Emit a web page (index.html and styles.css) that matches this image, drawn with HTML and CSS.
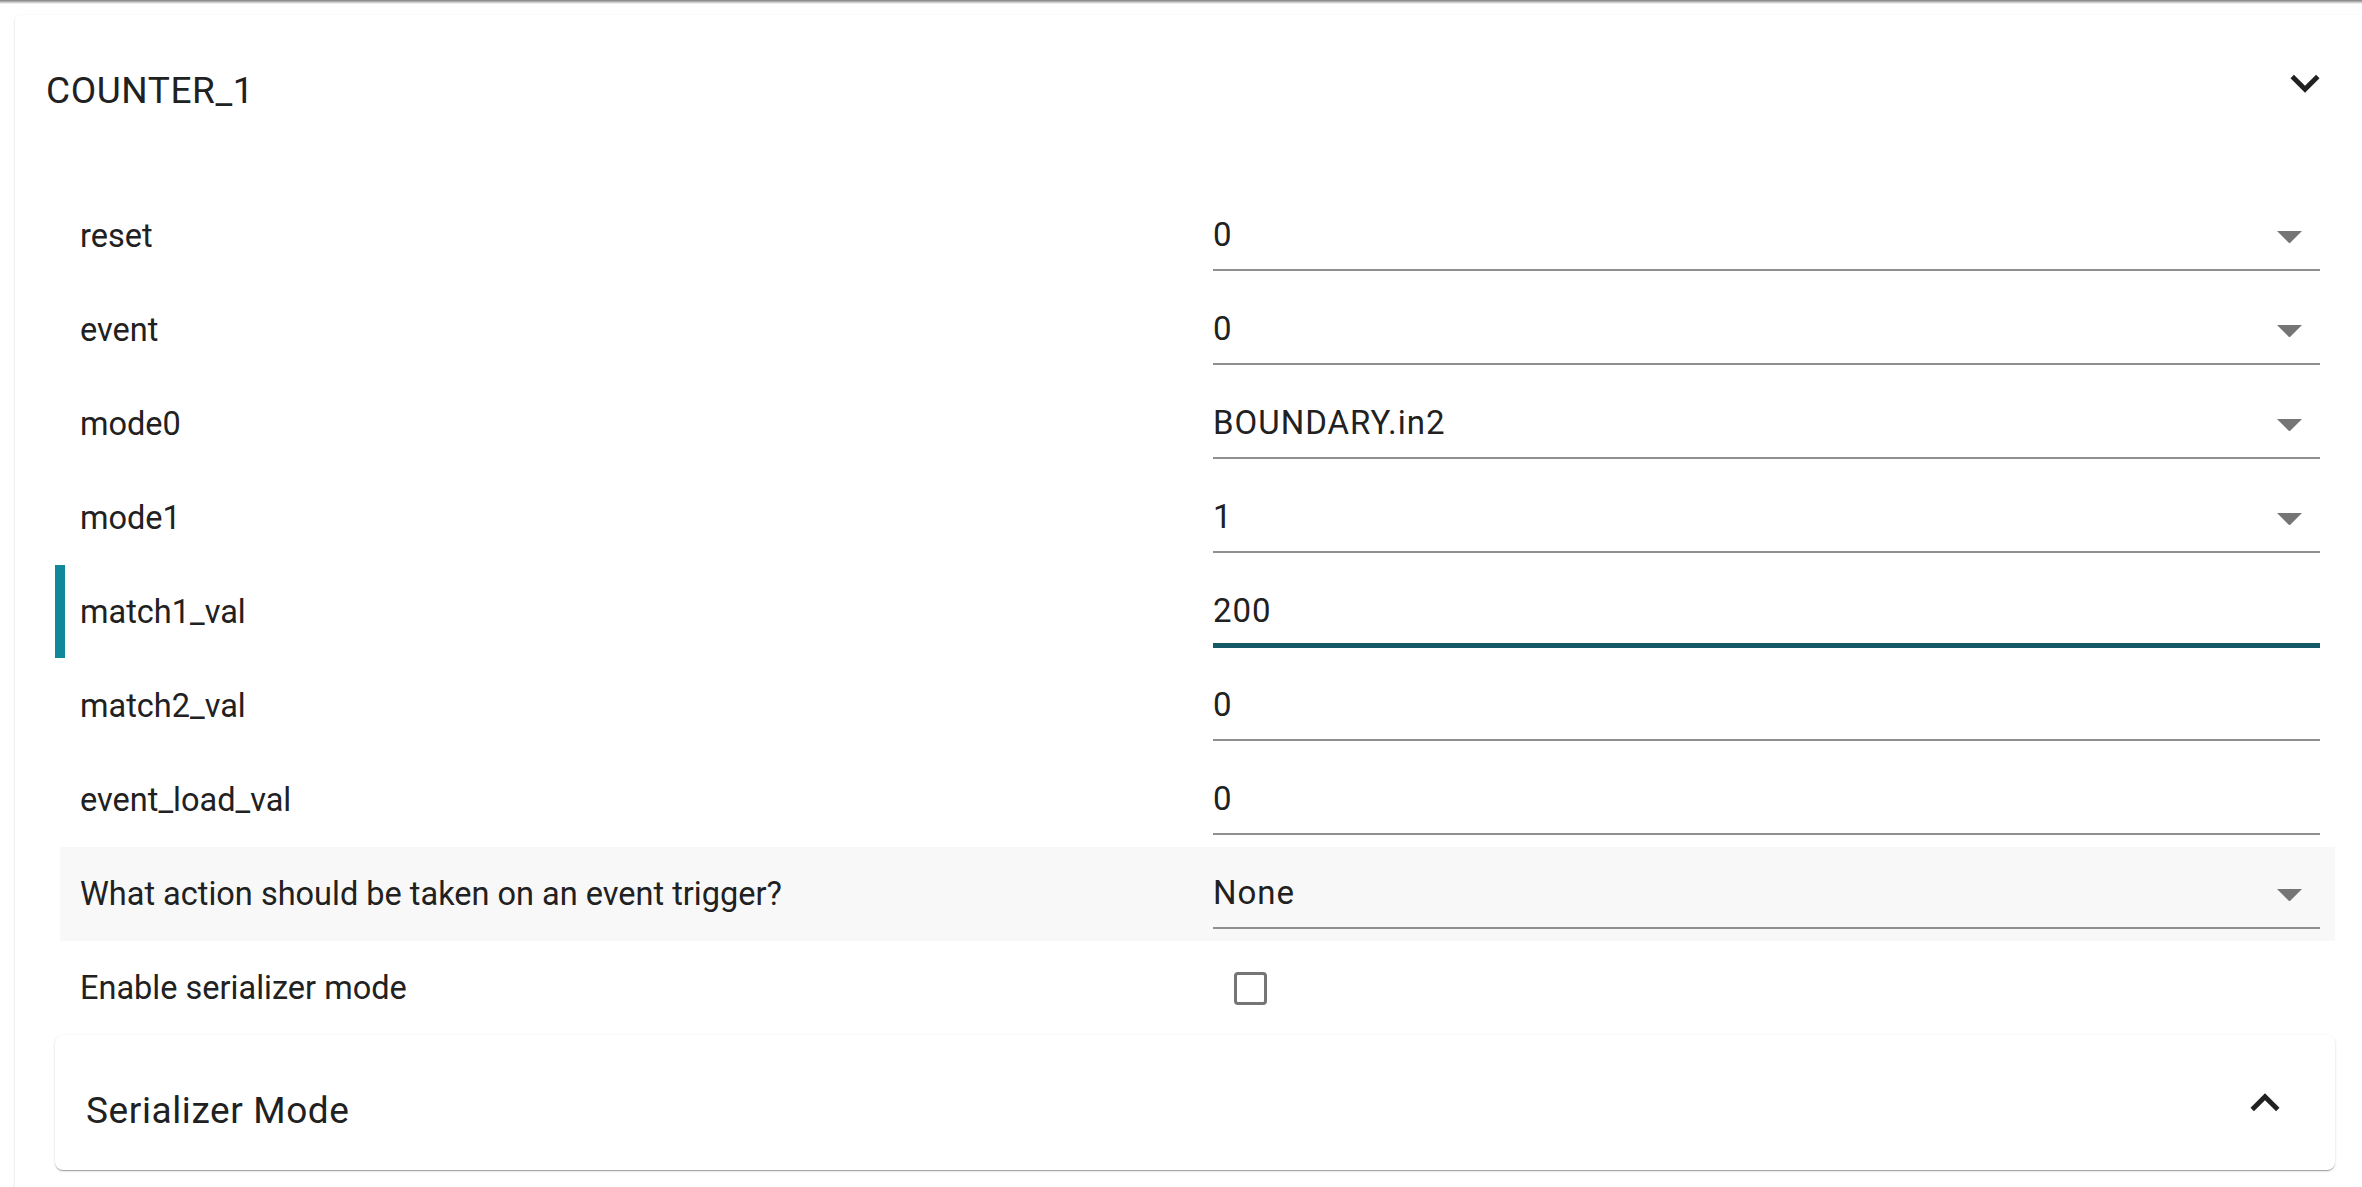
FILE: index.html
```html
<!DOCTYPE html>
<html lang="en">
<head>
<meta charset="utf-8">
<title>COUNTER_1</title>
<link rel="stylesheet" href="styles.css">
</head>
<body>
<div class="prev-edge"></div>
<section class="panel">
  <header class="panel-head">
    <h2 class="panel-title">COUNTER_1</h2>
    <svg class="chevron" viewBox="0 0 24 24" aria-hidden="true"><path d="M16.59 8.59 12 13.17 7.41 8.59 6 10l6 6 6-6z"/></svg>
  </header>
  <div class="panel-body">
    <div class="row">
      <span class="label">reset</span>
      <div class="field select"><span class="value">0</span><svg class="caret" viewBox="0 0 10 5"><path d="M0 0h10L5 5z"/></svg></div>
    </div>
    <div class="row">
      <span class="label">event</span>
      <div class="field select"><span class="value">0</span><svg class="caret" viewBox="0 0 10 5"><path d="M0 0h10L5 5z"/></svg></div>
    </div>
    <div class="row">
      <span class="label">mode0</span>
      <div class="field select"><span class="value">BOUNDARY.in2</span><svg class="caret" viewBox="0 0 10 5"><path d="M0 0h10L5 5z"/></svg></div>
    </div>
    <div class="row">
      <span class="label">mode1</span>
      <div class="field select"><span class="value">1</span><svg class="caret" viewBox="0 0 10 5"><path d="M0 0h10L5 5z"/></svg></div>
    </div>
    <div class="row active">
      <span class="label">match1_val</span>
      <div class="field focused"><span class="value">200</span></div>
    </div>
    <div class="row">
      <span class="label">match2_val</span>
      <div class="field"><span class="value">0</span></div>
    </div>
    <div class="row">
      <span class="label">event_load_val</span>
      <div class="field"><span class="value">0</span></div>
    </div>
    <div class="row shaded">
      <span class="label">What action should be taken on an event trigger?</span>
      <div class="field select"><span class="value">None</span><svg class="caret" viewBox="0 0 10 5"><path d="M0 0h10L5 5z"/></svg></div>
    </div>
    <div class="row">
      <span class="label">Enable serializer mode</span>
      <div class="check-cell"><span class="checkbox"></span></div>
    </div>
    <section class="subpanel">
      <h3 class="panel-title">Serializer Mode</h3>
      <svg class="chevron" viewBox="0 0 24 24" aria-hidden="true"><path d="M12 8l-6 6 1.41 1.41L12 10.83l4.59 4.58L18 14z"/></svg>
    </section>
  </div>
</section>
</body>
</html>
```
FILE: styles.css
```css
html, body {
  margin: 0;
  padding: 0;
  background: #fff;
  overflow: hidden;
}

body {
  font-family: Roboto, "Noto Sans", sans-serif;
  color: #212121;
  width: 2362px;
  height: 1187px;
}

/* bottom edge of the panel above */
.prev-edge {
  height: 4px;
  background: linear-gradient(#7e7e7e, #b0b0b0 40%, #e2e2e2 75%, #f6f6f6);
}

.panel {
  margin: 11px 0 0 15px;
  width: 2359px;
  background: #fff;
  border-radius: 5px;
  box-shadow: 0 2px 1px -1px rgba(0,0,0,.2), 0 1px 1px 0 rgba(0,0,0,.14), 0 1px 3px 0 rgba(0,0,0,.12);
  min-height: 1300px;
}

.panel-head {
  height: 135px;
  display: flex;
  align-items: center;
  justify-content: space-between;
  padding: 0 40px 0 31px;
}

.panel-title {
  margin: 15px 0 0;
  font-size: 37px;
  line-height: 43px;
  font-weight: 400;
  letter-spacing: 0.6px;
}

.chevron {
  width: 58px;
  height: 58px;
  fill: #212121;
  flex: none;
}

.panel-body {
  padding: 39px 39px 0 40px;
}

.row {
  position: relative;
  height: 94px;
  margin-left: 5px;
  display: grid;
  grid-template-columns: 1133px 1fr;
  align-items: center;
  padding: 0 15px 0 20px;
}

.row.shaded {
  background: #f8f8f8;
}

/* active-row marker */
.row.active::before {
  content: "";
  position: absolute;
  left: -5px;
  top: 0;
  bottom: 1px;
  width: 10px;
  background: #11889a;
}

.label {
  font-size: 32.5px;
  line-height: 40px;
}

.field {
  position: relative;
  align-self: start;
  margin-top: 26px;
  height: 40px;
  padding-bottom: 14px;
  border-bottom: 2px solid #8f8f8f;
  display: flex;
  align-items: center;
  justify-content: space-between;
}

.field.focused::after {
  content: "";
  position: absolute;
  left: 0;
  right: 0;
  bottom: -3px;
  height: 5px;
  background: #155866;
}

.value {
  font-size: 33px;
  line-height: 40px;
  letter-spacing: 1px;
}

.caret {
  width: 25px;
  height: 12.5px;
  margin: 4px 18px 0 0;
  fill: #757575;
}

.check-cell {
  display: flex;
  align-items: center;
  padding-left: 21px;
}

.checkbox {
  width: 27px;
  height: 27px;
  border: 3px solid #757575;
  border-radius: 4px;
}

.subpanel {
  height: 135px;
  display: flex;
  align-items: center;
  justify-content: space-between;
  padding: 0 41px 0 31px;
  background: #fff;
  border-radius: 8px;
  box-shadow: 0 2px 1px -1px rgba(0,0,0,.2), 0 1px 1px 0 rgba(0,0,0,.14), 0 1px 3px 0 rgba(0,0,0,.12);
}
```
